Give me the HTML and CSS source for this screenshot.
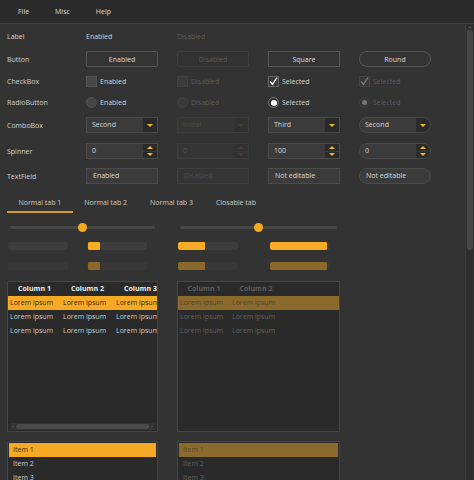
FILE: index.html
```html
<!DOCTYPE html>
<html>
<head>
<meta charset="utf-8">
<link rel="stylesheet" href="styles.css">
</head>
<body>
<div class="menubar"><span>File</span><span>Misc</span><span>Help</span></div>
<div class="main">
  <div class="content">
    <div class="row r11 mb9">
      <div class="lbl">Label</div>
      <div class="lbl">Enabled</div>
      <div class="lbl dis">Disabled</div>
    </div>
    <div class="row r16 mb9">
      <div class="lbl">Button</div>
      <div class="btn">Enabled</div>
      <div class="btn disabled">Disabled</div>
      <div class="btn square">Square</div>
      <div class="btn round">Round</div>
    </div>
    <div class="row r11 mb10">
      <div class="lbl">CheckBox</div>
      <div class="opt"><span class="cb"></span>Enabled</div>
      <div class="opt dis"><span class="cb off"></span>Disabled</div>
      <div class="opt"><span class="cb on"><svg viewBox="0 0 11 11" width="11" height="11"><path d="M2.3 5.6 L4.4 8.3 L9 1.6" fill="none" stroke="#ffffff" stroke-width="1.4"/></svg></span>Selected</div>
      <div class="opt dis"><span class="cb onoff"><svg viewBox="0 0 11 11" width="11" height="11"><path d="M2.3 5.6 L4.4 8.3 L9 1.6" fill="none" stroke="#7a7a7a" stroke-width="1.4"/></svg></span>Selected</div>
    </div>
    <div class="row r11 mb9">
      <div class="lbl">RadioButton</div>
      <div class="opt"><span class="rb"></span>Enabled</div>
      <div class="opt dis"><span class="rb off"></span>Disabled</div>
      <div class="opt"><span class="rb on"><span class="dot"></span></span>Selected</div>
      <div class="opt dis"><span class="rb onoff"><span class="dot"></span></span>Selected</div>
    </div>
    <div class="row r16 mb10">
      <div class="lbl">ComboBox</div>
      <div class="field"><span class="val">Second</span><span class="arrow"><span class="tri-d"></span></span></div>
      <div class="field disabled"><span class="val">Initial</span><span class="arrow"><span class="tri-d"></span></span></div>
      <div class="field"><span class="val">Third</span><span class="arrow"><span class="tri-d"></span></span></div>
      <div class="field round"><span class="val">Second</span><span class="arrow"><span class="tri-d"></span></span></div>
    </div>
    <div class="row r16 mb9">
      <div class="lbl">Spinner</div>
      <div class="field"><span class="val">0</span><span class="arrows"><span class="half"><span class="tri-u"></span></span><span class="half"><span class="tri-d"></span></span></span></div>
      <div class="field disabled"><span class="val">0</span><span class="arrows"><span class="half"><span class="tri-u"></span></span><span class="half"><span class="tri-d"></span></span></span></div>
      <div class="field"><span class="val">100</span><span class="arrows"><span class="half"><span class="tri-u"></span></span><span class="half"><span class="tri-d"></span></span></span></div>
      <div class="field round"><span class="val">0</span><span class="arrows"><span class="half"><span class="tri-u"></span></span><span class="half"><span class="tri-d"></span></span></span></div>
    </div>
    <div class="row r16">
      <div class="lbl">TextField</div>
      <div class="field text"><span class="val">Enabled</span></div>
      <div class="field text disabled"><span class="val">Disabled</span></div>
      <div class="field text"><span class="val">Not editable</span></div>
      <div class="field text round"><span class="val">Not editable</span></div>
    </div>

    <div class="tabs">
      <div class="tab active">Normal tab 1</div>
      <div class="tab">Normal tab 2</div>
      <div class="tab">Normal tab 3</div>
      <div class="tab">Closable tab</div>
    </div>

    <div class="pane">
      <div class="slider g1 span-l"><div class="track"></div><div class="knob"></div></div>
      <div class="slider g1 span-r"><div class="track"></div><div class="knob"></div></div>

      <div class="bar g2 c1"></div>
      <div class="bar g2 c2"><div class="fill" style="margin-left:1px;width:12px"></div></div>
      <div class="bar g2 c3"><div class="fill" style="width:27px"></div></div>
      <div class="bar g2 c4"><div class="fill" style="width:57px"></div></div>

      <div class="bar dbar g3 c1"></div>
      <div class="bar dbar g3 c2"><div class="fill" style="margin-left:1px;width:12px"></div></div>
      <div class="bar dbar g3 c3"><div class="fill" style="width:27px"></div></div>
      <div class="bar dbar g3 c4"><div class="fill" style="width:57px"></div></div>

      <div class="table g4 span-l">
        <div class="trow head"><div class="tc">Column 1</div><div class="tc">Column 2</div><div class="tc">Column 3</div></div>
        <div class="trow sel"><div class="tc">Lorem ipsum</div><div class="tc">Lorem ipsum</div><div class="tc">Lorem ipsum</div></div>
        <div class="trow"><div class="tc">Lorem ipsum</div><div class="tc">Lorem ipsum</div><div class="tc">Lorem ipsum</div></div>
        <div class="trow"><div class="tc">Lorem ipsum</div><div class="tc">Lorem ipsum</div><div class="tc">Lorem ipsum</div></div>
        <div class="tspace"></div>
        <div class="hscroll"><span class="harr">&#8249;</span><span class="hthumb"></span><span class="harr">&#8250;</span></div>
      </div>
      <div class="table tdis g4 span-r">
        <div class="trow head"><div class="tc n">Column 1</div><div class="tc n">Column 2</div></div>
        <div class="trow sel"><div class="tc n">Lorem ipsum</div><div class="tc n">Lorem ipsum</div></div>
        <div class="trow"><div class="tc n">Lorem ipsum</div><div class="tc n">Lorem ipsum</div></div>
        <div class="trow"><div class="tc n">Lorem ipsum</div><div class="tc n">Lorem ipsum</div></div>
      </div>

      <div class="list g5 span-l">
        <div class="item sel">Item 1</div>
        <div class="item">Item 2</div>
        <div class="item">Item 3</div>
      </div>
      <div class="list ldis g5 span-r">
        <div class="item sel">Item 1</div>
        <div class="item">Item 2</div>
        <div class="item">Item 3</div>
      </div>
    </div>
  </div>
  <div class="vscroll"><span class="varr"></span><div class="vthumb"></div></div>
</div>
</body>
</html>
```

FILE: styles.css
```css
* { box-sizing: border-box; margin: 0; padding: 0; }
html, body { width: 474px; height: 480px; overflow: hidden; }
body {
  background: #333333;
  font-family: "Open Sans", "Noto Sans", sans-serif;
  font-size: 7px;
  color: #d4d4d4;
}
.menubar {
  height: 24px;
  background: #2b2b2b;
  border-bottom: 1px solid #3f3f3f;
  display: flex;
  align-items: center;
  gap: 26px;
  padding-left: 18px;
  color: #dcdcdc;
}
.main { display: flex; height: 456px; }
.content { flex: 1; padding: 7px 0 0 7px; overflow: hidden; }

.row {
  display: grid;
  grid-template-columns: 60px 72px 72px 72px 72px;
  column-gap: 19px;
  align-items: center;
}
.r11 { height: 11px; }
.r16 { height: 16px; }
.mb9 { margin-bottom: 9px; }
.mb10 { margin-bottom: 10px; }

.lbl { line-height: 11px; white-space: nowrap; color: #d2d2d2; }
.dis { color: #5b5b5b; }

.btn {
  height: 16px;
  border: 1px solid #575757;
  border-radius: 2px;
  background: #343434;
  display: flex;
  align-items: center;
  justify-content: center;
  color: #dcdcdc;
}
.btn.disabled { border-color: #3e3e3e; color: #5a5a5a; background: #333; }
.btn.square { border-radius: 0; }
.btn.round { border-radius: 8px; }

.opt { display: flex; align-items: center; gap: 3px; height: 11px; color: #d6d6d6; white-space: nowrap; }
.opt.dis { color: #5b5b5b; }
.cb {
  width: 11px; height: 11px; flex: none;
  background: #474747;
  border: 1px solid #535353;
  position: relative;
}
.cb.off { background: #3a3a3a; border-color: #414141; }
.cb.on { background: #393939; border-color: #686868; }
.cb.onoff { background: #363636; border-color: #444; }
.cb svg { position: absolute; left: -1px; top: -1px; }

.rb {
  width: 11px; height: 11px; flex: none;
  border-radius: 50%;
  background: #464646;
  border: 1px solid #505050;
  display: flex; align-items: center; justify-content: center;
}
.rb.off { background: #393939; border-color: #404040; }
.rb.on { background: #2f2f2f; border-color: #7a7a7a; }
.rb.on .dot { width: 6px; height: 6px; border-radius: 50%; background: #ffffff; }
.rb.onoff { background: #363636; border-color: #404040; }
.rb.onoff .dot { width: 5px; height: 5px; border-radius: 50%; background: #767676; }

.field {
  height: 16px;
  border: 1px solid #4b4b4b;
  background: #3b3b3b;
  display: flex;
  overflow: hidden;
  color: #d8d8d8;
}
.field .val { flex: 1; padding-left: 5px; line-height: 14px; white-space: nowrap; }
.field.text .val { padding-left: 6px; }
.field.disabled { background: #353535; border-color: #3d3d3d; color: #4f4f4f; }
.field.round { border-radius: 8px; }
.arrow {
  width: 14px; flex: none;
  background: #2a2a2a;
  display: flex; align-items: center; justify-content: center;
}
.arrows { width: 14px; flex: none; display: flex; flex-direction: column; background: #2a2a2a; }
.half { flex: 1; display: flex; align-items: center; justify-content: center; }
.half + .half { border-top: 1px solid #3a3a3a; }
.tri-d { width: 0; height: 0; border-left: 3px solid transparent; border-right: 3px solid transparent; border-top: 3px solid #efb72a; }
.tri-u { width: 0; height: 0; border-left: 3px solid transparent; border-right: 3px solid transparent; border-bottom: 3px solid #efb72a; }
.field.disabled .arrow, .field.disabled .arrows { background: #323232; }
.field.disabled .tri-d { border-top-color: #4a4230; }
.field.disabled .tri-u { border-bottom-color: #4a4230; }
.field.disabled .half + .half { border-top-color: #363636; }

.tabs { display: flex; height: 19px; margin-top: 10px; }
.tab {
  padding: 0 11.5px;
  line-height: 17px;
  color: #cdcdcd;
  border-bottom: 2px solid transparent;
  white-space: nowrap;
}
.tab.active { border-bottom-color: #d99a2c; }

.pane {
  display: grid;
  grid-template-columns: 60px 72px 72px 72px 72px;
  column-gap: 19px;
  grid-template-rows: 20px 20px 19px 160px 60px;
  margin-top: 9px;
  align-items: start;
}
.g1 { grid-row: 1; }
.g2 { grid-row: 2; }
.g3 { grid-row: 3; }
.g4 { grid-row: 4; }
.g5 { grid-row: 5; }
.c1 { grid-column: 1; margin-left: 1px; }
.c2 { grid-column: 2; margin-left: 1px; }
.c3 { grid-column: 3; margin-left: 1px; }
.c4 { grid-column: 4; margin-left: 2px; width: 57px; }
.span-l { grid-column: 1 / 3; }
.span-r { grid-column: 3 / 5; }

.slider { height: 10px; position: relative; display: flex; align-items: center; padding: 0 3px; }
.track { flex: 1; height: 3px; border-radius: 2px; background: #474747; }
.knob {
  position: absolute; left: calc(50% - 4.5px); top: 0.5px;
  width: 9px; height: 9px; border-radius: 50%;
  background: #f6a925;
}

.bar { height: 8px; width: 60px; background: #3d3d3d; border-radius: 2px; overflow: hidden; display: flex; }
.bar.dbar { background: #383838; }
.fill { height: 100%; background: #f8ab25; border-radius: 1px; }
.dbar .fill { background: #8a692b; }

.table {
  height: 151px;
  border: 1px solid #454545;
  background: #2a2a2a;
  overflow: hidden;
  display: flex;
  flex-direction: column;
}
.trow { display: flex; height: 14px; flex: none; align-items: center; white-space: nowrap; color: #c9c9c9; }
.tc { width: 53px; flex: none; padding-left: 2px; line-height: 14px; }
.tc.n { width: 52px; }
.trow.head .tc { text-align: center; padding-left: 0; font-weight: 700; color: #eeeeee; }
.trow.sel { background: #f6a925; color: #3a2906; }
.tspace { flex: 1; }
.hscroll {
  height: 7px; margin: 0 2px 1px 2px; flex: none;
  display: flex; align-items: center;
  background: #333;
}
.harr { width: 6px; text-align: center; color: #777; font-size: 6px; line-height: 7px; }
.hthumb { flex: 1; height: 5px; border-radius: 3px; background: #4b4b4b; }

.tdis .trow { color: #606060; }
.tdis .trow.head .tc { color: #5e5e5e; }
.tdis .trow.sel { background: #8b6a2d; color: #56462a; }

.list {
  height: 60px;
  border: 1px solid #454545;
  background: #2a2a2a;
  padding: 1px;
  overflow: hidden;
}
.item { height: 14px; line-height: 14px; padding-left: 4px; color: #cfcfcf; }
.item.sel { background: #f6a925; color: #3a2906; }
.ldis .item { color: #5e5e5e; }
.ldis .item.sel { background: #8b6a2d; color: #56462a; }

.vscroll {
  width: 9px; flex: none;
  background: #2f2f2f;
  border-left: 1px solid #3a3a3a;
  display: flex; flex-direction: column; align-items: center;
  padding-top: 2px;
}
.varr { width: 0; height: 0; border-left: 2px solid transparent; border-right: 2px solid transparent; border-bottom: 2px solid #555; margin-bottom: 2px; }
.vthumb { width: 6px; height: 220px; border-radius: 3px; background: #474747; }
```
